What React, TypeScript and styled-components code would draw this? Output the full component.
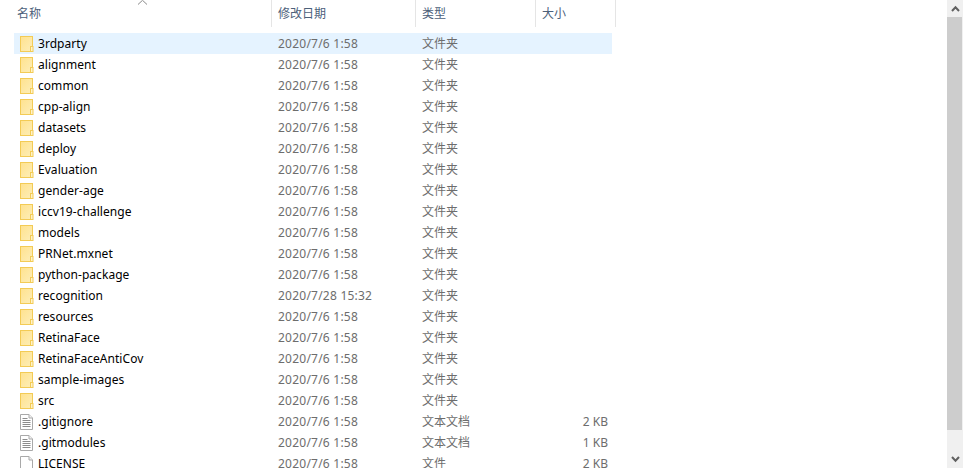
import React from "react";
import styled, { createGlobalStyle } from "styled-components";

const GlobalStyle = createGlobalStyle`
  html, body {
    margin: 0;
    height: 100%;
    overflow: hidden;
    background: #fff;
    font-family: "Noto Sans", "Noto Sans CJK SC", sans-serif;
    font-size: 12px;
  }
`;

const Window = styled.div`
  display: flex;
  width: 963px;
  height: 468px;
  overflow: hidden;
`;

const Pane = styled.div`
  flex: 1;
  min-width: 0;
  position: relative;
`;

const SortArrow = styled.svg`
  position: absolute;
  left: 137px;
  top: 0;
`;

const Header = styled.div`
  display: flex;
  height: 27px;
  margin-bottom: 6px;
`;

const HeaderCell = styled.div<{ $width: number; $pad: number }>`
  box-sizing: border-box;
  width: ${(p) => p.$width}px;
  padding-left: ${(p) => p.$pad}px;
  border-right: 1px solid #e5e5e5;
  color: #4c607a;
  line-height: 28px;
`;

const Row = styled.div<{ $selected?: boolean }>`
  display: flex;
  align-items: center;
  width: 598px;
  height: 21px;
  margin-left: 14px;
  background: ${(p) => (p.$selected ? "#e5f3ff" : "transparent")};
  line-height: 21px;
`;

const IconSlot = styled.div`
  display: flex;
  width: 24px;
  padding-left: 6px;
  box-sizing: border-box;
`;

const NameCell = styled.div`
  width: 240px;
  color: #000;
  letter-spacing: 0.05px;
`;

const DateCell = styled.div`
  width: 144px;
  color: #6d6d6d;
  letter-spacing: 0.23px;
`;

const TypeCell = styled.div`
  width: 120px;
  color: #6d6d6d;
`;

const SizeCell = styled.div`
  width: 66px;
  color: #6d6d6d;
  text-align: right;
`;

const Scrollbar = styled.div`
  display: flex;
  flex-direction: column;
  width: 16px;
  height: 468px;
  background: #f0f0f0;
`;

const ScrollButton = styled.div`
  display: flex;
  align-items: center;
  justify-content: center;
  height: 17px;
  flex: none;
`;

const ScrollThumb = styled.div`
  width: 15px;
  height: 413px;
  background: #cdcdcd;
`;

const ScrollSpace = styled.div`
  flex: 1;
`;

const FolderIcon = () => (
  <svg width="14" height="16" viewBox="0 0 14 16">
    <defs>
      <linearGradient id="folderFill" x1="0" y1="0" x2="1" y2="1">
        <stop offset="0" stopColor="#ffe28e" />
        <stop offset="1" stopColor="#fdeeb8" />
      </linearGradient>
    </defs>
    <rect x="0.5" y="0.5" width="12" height="15" fill="url(#folderFill)" stroke="#f3cb55" />
    <rect x="10.5" y="10.5" width="2.5" height="5" fill="#fff3c9" stroke="#f3cb55" />
  </svg>
);

const TextFileIcon = ({ lines }: { lines: boolean }) => (
  <svg width="13" height="16" viewBox="0 0 13 16">
    <path d="M0.5 0.5H9L12.5 4V15.5H0.5Z" fill="#fff" stroke="#a9a9a9" />
    <path d="M9 0.5V4H12.5" fill="#f2f2f2" stroke="#a9a9a9" />
    {lines && <path d="M2.5 4.5H7.5M2.5 6.5H10.5M2.5 8.5H10.5M2.5 10.5H10.5M2.5 12.5H10.5" stroke="#8c8c8c" />}
  </svg>
);

type Item = { name: string; date: string; type: string; size?: string; icon: "folder" | "text" | "blank" };

const folders = [
  "3rdparty", "alignment", "common", "cpp-align", "datasets", "deploy", "Evaluation", "gender-age",
  "iccv19-challenge", "models", "PRNet.mxnet", "python-package", "recognition", "resources",
  "RetinaFace", "RetinaFaceAntiCov", "sample-images", "src",
];

const items: Item[] = [
  ...folders.map((name): Item => ({
    name,
    date: name === "recognition" ? "2020/7/28 15:32" : "2020/7/6 1:58",
    type: "文件夹",
    icon: "folder",
  })),
  { name: ".gitignore", date: "2020/7/6 1:58", type: "文本文档", size: "2 KB", icon: "text" },
  { name: ".gitmodules", date: "2020/7/6 1:58", type: "文本文档", size: "1 KB", icon: "text" },
  { name: "LICENSE", date: "2020/7/6 1:58", type: "文件", size: "2 KB", icon: "blank" },
];

export default function App() {
  return (
    <Window>
      <GlobalStyle />
      <Pane>
        <SortArrow width="12" height="6" viewBox="0 0 12 6">
          <path d="M1 4.5L5.5 0.3L10 4.5" fill="none" stroke="#8a8a8a" />
        </SortArrow>
        <Header>
          <HeaderCell $width={272} $pad={17}>名称</HeaderCell>
          <HeaderCell $width={144} $pad={6}>修改日期</HeaderCell>
          <HeaderCell $width={120} $pad={6}>类型</HeaderCell>
          <HeaderCell $width={80} $pad={6}>大小</HeaderCell>
        </Header>
        {items.map((item, i) => (
          <Row key={item.name} $selected={i === 0}>
            <IconSlot>
              {item.icon === "folder" ? <FolderIcon /> : <TextFileIcon lines={item.icon === "text"} />}
            </IconSlot>
            <NameCell>{item.name}</NameCell>
            <DateCell>{item.date}</DateCell>
            <TypeCell>{item.type}</TypeCell>
            <SizeCell>{item.size}</SizeCell>
          </Row>
        ))}
      </Pane>
      <Scrollbar>
        <ScrollButton>
          <svg width="9" height="7" viewBox="0 0 9 7">
            <path d="M1 6L4.5 2.2L8 6" fill="none" stroke="#606060" strokeWidth="2" />
          </svg>
        </ScrollButton>
        <ScrollThumb />
        <ScrollSpace />
        <ScrollButton>
          <svg width="9" height="7" viewBox="0 0 9 7">
            <path d="M1 1L4.5 4.8L8 1" fill="none" stroke="#606060" strokeWidth="2" />
          </svg>
        </ScrollButton>
      </Scrollbar>
    </Window>
  );
}
